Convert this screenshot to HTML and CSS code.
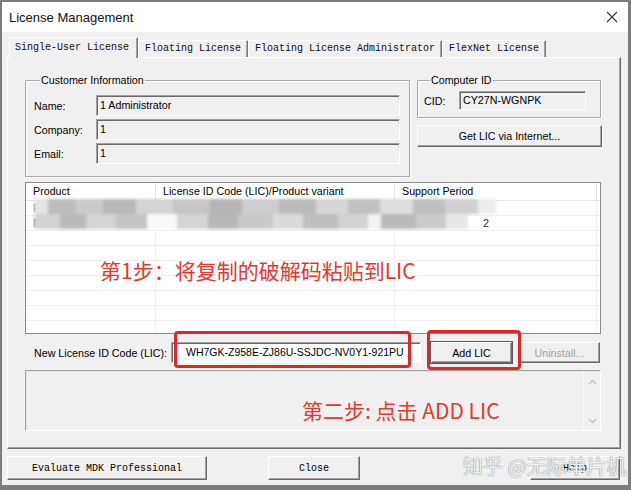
FILE: index.html
```html
<!DOCTYPE html>
<html lang="zh-CN">
<head>
  <meta charset="UTF-8">
  <meta name="viewport" content="width=device-width, initial-scale=1.0">
  <title>License Management</title>
  <link rel="stylesheet" href="styles.css">
</head>
<body>
  <div class="window">
    <div class="titlebar">
      <span class="title">License Management</span>
      <svg class="close" width="12" height="12" viewBox="0 0 12 12">
        <path d="M1 1 L11 11 M11 1 L1 11" stroke="#333" stroke-width="1.1" fill="none"/>
      </svg>
    </div>

    <div class="client">
      <div class="tabs">
        <div class="tab active">Single-User License</div>
        <div class="tab">Floating License</div>
        <div class="tab">Floating License Administrator</div>
        <div class="tab">FlexNet License</div>
      </div>

      <div class="panel">
        <div class="top-row">
          <fieldset class="group customer">
            <legend>Customer Information</legend>
            <div class="field">
              <label>Name:</label>
              <div class="edit">1 Administrator</div>
            </div>
            <div class="field">
              <label>Company:</label>
              <div class="edit">1</div>
            </div>
            <div class="field">
              <label>Email:</label>
              <div class="edit">1</div>
            </div>
          </fieldset>

          <div class="side">
            <fieldset class="group computer">
              <legend>Computer ID</legend>
              <div class="field cid-field">
                <label>CID:</label>
                <div class="edit cid">CY27N-WGNPK</div>
              </div>
            </fieldset>
            <button class="btn get-lic">Get LIC via Internet...</button>
          </div>
        </div>

        <div class="list">
          <div class="list-head">
            <div class="col c1">Product</div>
            <div class="col c2">License ID Code (LIC)/Product variant</div>
            <div class="col c3">Support Period</div>
          </div>
          <div class="row"><div class="cell c1">P</div><div class="cell c2"></div><div class="cell c3 end">2</div></div>
          <div class="row"><div class="cell c1">M</div><div class="cell c2"></div><div class="cell c3 end">2</div></div>
          <div class="row"><div class="cell c1"></div><div class="cell c2"></div><div class="cell c3"></div></div>
          <div class="row"><div class="cell c1"></div><div class="cell c2"></div><div class="cell c3"></div></div>
          <div class="row"><div class="cell c1"></div><div class="cell c2"></div><div class="cell c3"></div></div>
          <div class="row"><div class="cell c1"></div><div class="cell c2"></div><div class="cell c3"></div></div>
          <div class="row"><div class="cell c1"></div><div class="cell c2"></div><div class="cell c3"></div></div>
          <div class="row"><div class="cell c1"></div><div class="cell c2"></div><div class="cell c3"></div></div>
          <div class="row"><div class="cell c1"></div><div class="cell c2"></div><div class="cell c3"></div></div>

          <div class="mosaic">
            <div class="mos-row one"></div>
            <div class="mos-row two"></div>
          </div>
          <div class="note note-1">第1步：将复制的破解码粘贴到LIC</div>
        </div>

        <div class="lic-row">
          <label class="lic-label">New License ID Code (LIC):</label>
          <div class="edit lic">WH7GK-Z958E-ZJ86U-SSJDC-NV0Y1-921PU</div>
          <button class="btn default add">Add LIC</button>
          <button class="btn disabled">Uninstall...</button>
          <div class="mark mark-input"></div>
          <div class="mark mark-btn"></div>
        </div>

        <div class="log">
          <div class="scroll">
            <svg width="9" height="6" viewBox="0 0 9 6"><path d="M1 5 L4.5 1.5 L8 5" stroke="#c2c2c2" stroke-width="1.3" fill="none"/></svg>
            <svg width="9" height="6" viewBox="0 0 9 6"><path d="M1 1 L4.5 4.5 L8 1" stroke="#c2c2c2" stroke-width="1.3" fill="none"/></svg>
          </div>
          <div class="note note-2">第二步: 点击 ADD LIC</div>
        </div>
      </div>

      <div class="footer">
        <button class="btn mono evaluate">Evaluate MDK Professional</button>
        <button class="btn mono close-btn">Close</button>
        <button class="btn mono help">Help</button>
        <div class="watermark">知乎 @无际单片机</div>
      </div>
    </div>
  </div>
</body>
</html>
```

FILE: styles.css
```css
body {
  margin: 0;
  padding: 0;
  background: #f0f0f0;
  font-family: "Liberation Sans", Arial, sans-serif;
  font-size: 10.7px;
  color: #000;
}

.window {
  width: 631px;
  height: 490px;
  box-sizing: border-box;
  border-style: solid;
  border-color: #7c7c7c;
  border-width: 2px 3px 5px 2px;
  background: #f0f0f0;
  display: flex;
  flex-direction: column;
}

.titlebar {
  height: 30px;
  background: #fff;
  display: flex;
  align-items: center;
  padding-left: 7px;
  padding-right: 10px;
}

.title {
  font-size: 13px;
  flex: 1;
  color: #111;
}

.client {
  flex: 1;
  padding: 5px 7px 0 5px;
  display: flex;
  flex-direction: column;
}

/* tabs */
.tabs {
  display: flex;
  align-items: flex-end;
  height: 20px;
  padding-left: 2px;
  position: relative;
  z-index: 1;
}

.tab {
  font-family: "Liberation Mono", "Courier New", monospace;
  font-size: 10px;
  height: 17px;
  line-height: 16px;
  padding: 0 6px;
  box-sizing: border-box;
  border-top: 1px solid #fff;
  border-left: 1px solid #fff;
  border-right: 1px solid #7a7a7a;
  box-shadow: inset -1px 0 #a0a0a0;
  background: #f0f0f0;
  color: #111;
}

.tab.active {
  height: 21px;
  line-height: 19px;
  padding: 0 8px 0 5px;
  margin-bottom: -1px;
}

/* main panel */
.panel {
  border: 1px solid;
  border-color: #fff #6a6a6a #6a6a6a #fff;
  box-shadow: inset -1px -1px #a0a0a0;
  padding: 16px 19px 17px 17px;
  display: flex;
  flex-direction: column;
}

.top-row {
  display: flex;
  align-items: flex-start;
}

.group {
  margin: 0;
  border: 1px solid #a8a8a8;
  box-shadow: 1px 1px 0 #fff, inset 1px 1px 0 #fff;
}

.group legend {
  padding: 0 1px;
  margin-left: 6px;
  line-height: 13px;
}

.customer {
  width: 385px;
  box-sizing: border-box;
  padding: 8px 9px 12px 8px;
}

.field {
  display: flex;
  align-items: center;
  margin-bottom: 3px;
}

.field:last-of-type {
  margin-bottom: 0;
}

.field label {
  width: 62px;
  flex-shrink: 0;
}

.edit {
  flex: 1;
  height: 21px;
  box-sizing: border-box;
  border: 1px solid;
  border-color: #a0a0a0 #fff #fff #a0a0a0;
  box-shadow: inset 1px 1px #696969;
  padding: 3px 3px 0 3px;
  background: #f0f0f0;
  white-space: nowrap;
  overflow: hidden;
}

.side {
  margin-left: 7px;
  width: 184px;
  display: flex;
  flex-direction: column;
}

.computer {
  padding: 4px 14px 7px 6px;
}

.cid-field label {
  width: 35px;
}

.edit.cid {
  height: 19px;
  padding-top: 2px;
}

.btn {
  font-family: "Liberation Sans", Arial, sans-serif;
  font-size: 10.7px;
  color: #000;
  background: #f0f0f0;
  border: 1px solid;
  border-color: #fff #696969 #696969 #fff;
  box-shadow: inset -1px -1px #a0a0a0;
  padding: 0;
  height: 22px;
  box-sizing: border-box;
}

.get-lic {
  margin-top: 7px;
  width: 185px;
}

/* list view */
.list {
  position: relative;
  margin-top: 5px;
  height: 152px;
  box-sizing: border-box;
  border: 1px solid #8a8a8a;
  background: #fff;
  overflow: hidden;
}

.list-head {
  display: flex;
  height: 17px;
  border-bottom: 1px solid #e5e5e5;
}

.col {
  line-height: 17px;
  padding-left: 7px;
  box-sizing: border-box;
  border-right: 1px solid #e5e5e5;
}

.c1 { width: 130px; }
.c2 { width: 239px; }
.c3 { width: 202px; }

.row {
  display: flex;
  height: 14px;
  border-bottom: 1px solid #f0f0f0;
}

.cell {
  box-sizing: border-box;
  line-height: 14px;
  padding-left: 7px;
  border-right: 1px solid #f0f0f0;
  color: #333;
}

.cell.end {
  padding-left: 88px;
}

.mosaic {
  position: absolute;
  left: 8px;
  top: 16px;
  width: 462px;
  filter: blur(1.6px);
}

.mos-row {
  height: 15px;
}

.mos-row.one {
  background: linear-gradient(90deg,
    #e4e4e4 0 3%, #bdbdbd 3% 9%, #cbcbcb 9% 15%, #b9b9b9 15% 22%, #d4d4d4 22% 30%,
    #c6c6c6 30% 38%, #b5b5b5 38% 45%, #cdcdcd 45% 53%, #bbbbbb 53% 61%, #d6d6d6 61% 68%,
    #c1c1c1 68% 75%, #dedede 75% 82%, #bfbfbf 82% 89%, #d0d0d0 89% 96%, #ededed 96% 100%);
}

.mos-row.two {
  width: 94%;
  background: linear-gradient(90deg,
    #d2d2d2 0 6%, #bababa 6% 12%, #d4d4d4 12% 19%, #c4c4c4 19% 26%, #fafafa 26% 33%,
    #d4d4d4 33% 40%, #b8b8b8 40% 47%, #cacaca 47% 55%, #dadada 55% 62%, #bebebe 62% 70%,
    #d2d2d2 70% 77%, #f4f4f4 77% 80%, #bababa 80% 88%, #cbcbcb 88% 95%, #e8e8e8 95% 100%);
}

.note {
  position: absolute;
  font-family: "Noto Sans CJK SC", sans-serif;
  font-size: 21px;
  line-height: 24px;
  color: #e3392c;
  white-space: nowrap;
}

.note-1 {
  left: 74px;
  top: 75px;
}

/* new license row */
.lic-row {
  position: relative;
  display: flex;
  align-items: center;
  margin-top: 8px;
  height: 21px;
}

.lic-label {
  width: 146px;
  padding-left: 9px;
  box-sizing: border-box;
}

.edit.lic {
  flex: none;
  width: 250px;
  background: #fff;
  padding: 3px 0 0 14px;
  font-size: 10.5px;
}

.btn.add {
  margin-left: 10px;
  width: 81px;
  height: 21px;
  outline: 1px solid #5a5a5a;
}

.btn.disabled {
  margin-left: 7px;
  width: 81px;
  height: 21px;
  color: #a0a0a0;
}

.mark {
  position: absolute;
  border: 3px solid #e0262a;
  border-radius: 4px;
  box-sizing: border-box;
}

.mark-input {
  left: 149px;
  top: -11px;
  width: 237px;
  height: 37px;
}

.mark-btn {
  left: 402px;
  top: -12px;
  width: 94px;
  height: 40px;
}

/* message area */
.log {
  position: relative;
  margin-top: 7px;
  height: 61px;
  box-sizing: border-box;
  border: 1px solid;
  border-color: #a0a0a0 #fff #fff #a0a0a0;
  box-shadow: inset 1px 1px #e3e3e3;
  display: flex;
  justify-content: flex-end;
}

.scroll {
  width: 16px;
  border-left: 1px solid #f8f8f8;
  display: flex;
  flex-direction: column;
  justify-content: space-between;
  align-items: center;
  padding: 8px 0 6px;
}

.note-2 {
  left: 276px;
  top: 27px;
}

/* bottom buttons */
.footer {
  position: relative;
  display: flex;
  margin-top: 7px;
  height: 24px;
}

.btn.mono {
  font-family: "Liberation Mono", "Courier New", monospace;
  font-size: 10px;
  height: 24px;
}

.evaluate {
  margin-left: 0;
  width: 200px;
}

.close-btn {
  margin-left: 61px;
  width: 92px;
}

.help {
  margin-left: auto;
  margin-right: 1px;
  width: 90px;
}

.watermark {
  position: absolute;
  left: 456px;
  top: -2px;
  font-family: "Noto Sans CJK SC", sans-serif;
  font-size: 20px;
  line-height: 24px;
  color: rgba(255, 255, 255, 0.9);
  text-shadow: 0 0 1px #8a8a8a, 0 0 1px #8a8a8a;
  white-space: nowrap;
}
```
